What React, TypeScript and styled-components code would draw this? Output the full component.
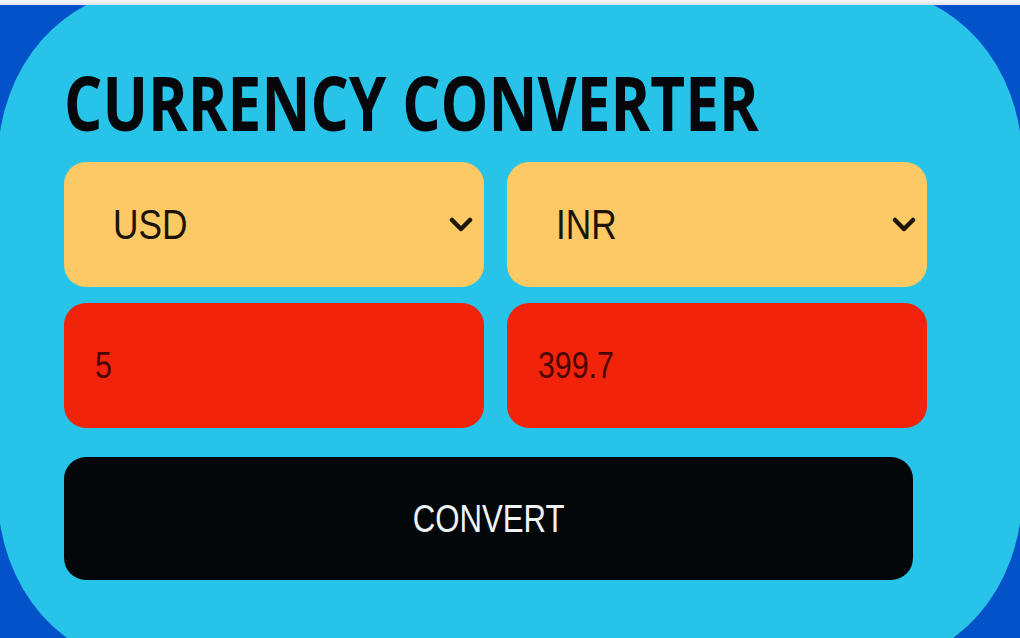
import styled, { createGlobalStyle } from 'styled-components';

const GlobalStyle = createGlobalStyle`
  html, body {
    margin: 0;
    padding: 0;
    background: #0452c9;
    overflow: hidden;
  }
  body {
    font-family: 'Liberation Sans', Arial, sans-serif;
  }
`;

const Page = styled.div`
  width: 1020px;
  height: 638px;
  display: flex;
  flex-direction: column;
  overflow: hidden;
  background: #0452c9;
`;

const TopStrip = styled.div`
  flex: none;
  height: 5px;
  background: linear-gradient(#f4f7f9, #dbe4ea);
`;

const Stage = styled.div`
  flex: 1;
  overflow: hidden;
`;

const Card = styled.main`
  width: 1024px;
  height: 675px;
  box-sizing: border-box;
  margin: -15px 0 0 -2px;
  padding: 75px 0 0 66px;
  background: #27c3e8;
  border-radius: 150px / 170px;
  display: flex;
  flex-direction: column;
`;

// text in this layout is set a little narrower than the regular face
const Narrow = styled.span<{ $k?: number; $origin?: string }>`
  display: inline-block;
  white-space: nowrap;
  transform: scaleX(${({ $k }) => $k ?? 0.82});
  transform-origin: ${({ $origin }) => $origin || 'left center'};
`;

const Title = styled.h1`
  margin: 0;
  font-family: 'Open Sans', 'Liberation Sans', sans-serif;
  font-weight: 700;
  font-size: 75px;
  line-height: 75px;
  color: #05070a;
  white-space: nowrap;
`;

const Grid = styled.div`
  margin-top: 22px;
  display: grid;
  grid-template-columns: 420px 420px;
  grid-auto-rows: 125px;
  column-gap: 23px;
  row-gap: 16px;
`;

const Picker = styled.div`
  display: flex;
  align-items: center;
  justify-content: space-between;
  padding: 0 11px 0 49px;
  border-radius: 22px;
  background: #fdc965;
  color: #1c1408;
  font-size: 43px;
  line-height: 1;
`;

const Chevron = styled.svg`
  flex: none;
  width: 24px;
  height: 15px;
`;

const Field = styled.div`
  display: flex;
  align-items: center;
  padding-left: 31px;
  border-radius: 22px;
  background: #f2230b;
  color: #4a0600;
  font-size: 37px;
  line-height: 1;
`;

const ConvertButton = styled.button`
  margin-top: 29px;
  width: 849px;
  height: 123px;
  border: none;
  border-radius: 22px;
  background: #03070a;
  color: #eef4f6;
  font-family: 'Liberation Sans', Arial, sans-serif;
  font-size: 38px;
  line-height: 1;
  display: flex;
  align-items: center;
  justify-content: center;
  cursor: pointer;
`;

const Select = ({ code }: { code: string }) => (
  <Picker>
    <Narrow>{code}</Narrow>
    <Chevron viewBox="0 0 24 15">
      <polyline
        points="3,3 12,12 21,3"
        fill="none"
        stroke="#1d1607"
        strokeWidth="4.5"
        strokeLinecap="round"
        strokeLinejoin="round"
      />
    </Chevron>
  </Picker>
);

const App = () => {
  return (
    <Page>
      <GlobalStyle />
      <TopStrip />
      <Stage>
        <Card>
          <Title>
            <Narrow $k={0.804}>CURRENCY CONVERTER</Narrow>
          </Title>
          <Grid>
            <Select code="USD" />
            <Select code="INR" />
            <Field>
              <Narrow>5</Narrow>
            </Field>
            <Field>
              <Narrow>399.7</Narrow>
            </Field>
          </Grid>
          <ConvertButton>
            <Narrow $origin="center">CONVERT</Narrow>
          </ConvertButton>
        </Card>
      </Stage>
    </Page>
  );
};

export default App;
